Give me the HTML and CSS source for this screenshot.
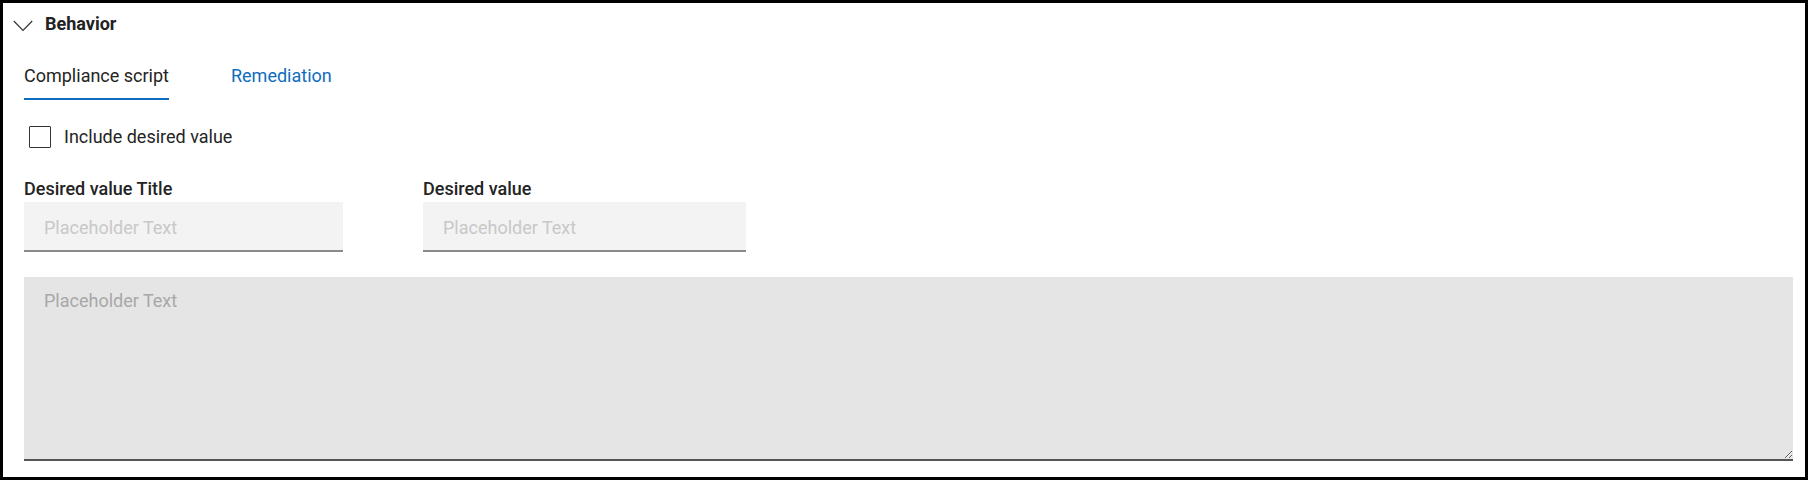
FILE: index.html
```html
<!DOCTYPE html>
<html lang="en">
<head>
<meta charset="utf-8">
<title>Behavior</title>
<link rel="stylesheet" href="styles.css">
</head>
<body>
<section class="panel">
  <header class="panel-header">
    <svg class="chevron" width="20" height="12" viewBox="0 0 20 12" aria-hidden="true">
      <polyline points="0.8,1 10,10.4 19.2,1" fill="none" stroke="#333" stroke-width="1.2"/>
    </svg>
    <h2 class="panel-title">Behavior</h2>
  </header>
  <div class="panel-body">
    <nav class="tabs">
      <span class="tab tab-active">Compliance script</span>
      <span class="tab tab-link">Remediation</span>
    </nav>
    <label class="check-row">
      <span class="check-box"></span>
      <span class="check-label">Include desired value</span>
    </label>
    <div class="fields">
      <div class="field">
        <div class="field-label">Desired value Title</div>
        <input class="field-input" type="text" placeholder="Placeholder Text">
      </div>
      <div class="field">
        <div class="field-label">Desired value</div>
        <input class="field-input" type="text" placeholder="Placeholder Text">
      </div>
    </div>
    <textarea class="script-area" placeholder="Placeholder Text"></textarea>
  </div>
</section>
</body>
</html>
```
FILE: styles.css
```css
* { box-sizing: border-box; }
html, body { margin: 0; padding: 0; background: #fff; }
body { font-family: Roboto, "Noto Sans", "Liberation Sans", sans-serif; color: #242424; }

.panel {
  width: 1808px;
  height: 480px;
  border: 3px solid #000;
  overflow: hidden;
}

.panel-header {
  display: flex;
  align-items: center;
  height: 42px;
  padding-left: 10px;
}
.chevron { display: block; margin-top: 3px; }
.panel-title {
  margin: 0 0 0 12px;
  font-size: 18px;
  font-weight: 700;
  line-height: 22px;
  color: #222;
}

.panel-body { padding: 0 12px 0 21px; }

.tabs {
  display: flex;
  gap: 62px;
  margin-top: 20px;
}
.tab {
  font-size: 18px;
  line-height: 22px;
  padding-bottom: 11px;
  border-bottom: 2px solid transparent;
}
.tab-active { color: #242424; border-bottom-color: #0f6cbd; }
.tab-link { color: #0f6cbd; }

.check-row {
  display: flex;
  align-items: center;
  height: 22px;
  margin-top: 26px;
  padding-left: 5px;
}
.check-box {
  width: 22px;
  height: 22px;
  border: 1.5px solid #333;
  border-radius: 1px;
}
.check-label {
  margin-left: 13px;
  font-size: 18px;
  line-height: 22px;
  color: #242424;
}

.fields {
  display: grid;
  grid-template-columns: 319px 323px;
  column-gap: 80px;
  margin-top: 31px;
}
.field-label {
  font-size: 18px;
  font-weight: 500;
  line-height: 20px;
  margin-bottom: 3px;
  color: #242424;
}
.field-input {
  display: block;
  width: 100%;
  height: 50px;
  margin: 0;
  padding: 2px 20px 0;
  border: 0;
  border-bottom: 2px solid #8a8a8a;
  border-radius: 0;
  background: #f3f3f3;
  font-family: inherit;
  font-size: 18px;
  color: #242424;
  outline: none;
}
.field-input::placeholder { color: #c8c8c8; opacity: 1; }

.script-area {
  display: block;
  width: 100%;
  height: 184px;
  margin: 25px 0 0;
  padding: 14px 20px;
  border: 0;
  border-bottom: 2px solid #555;
  border-radius: 0;
  background: #e5e5e5;
  font-family: inherit;
  font-size: 18px;
  line-height: 20px;
  color: #242424;
  resize: vertical;
  outline: none;
}
.script-area::placeholder { color: #a8a8a8; opacity: 1; }
```
